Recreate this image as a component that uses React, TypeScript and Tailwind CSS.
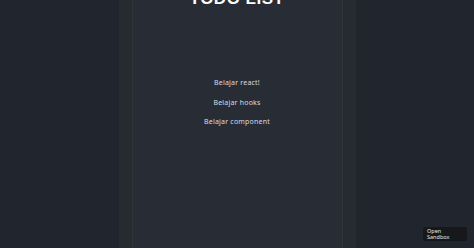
import React from 'react'

const App = () => {
    const todos: string[] = ['Belajar react!', 'Belajar hooks', 'Belajar component']

    return (
        <div className="relative h-[248px] w-full overflow-hidden bg-[#21252d] font-['Noto_Sans',sans-serif]">
            {/* column */}
            <div className="mx-auto flex h-full w-[237px] bg-[#262a31] px-[13px]">
                <div className="flex h-full w-full flex-col items-center border-x border-[#2b3639] bg-[#282c35]">
                    <h1 className="mt-[-10px] text-[17px] font-bold uppercase leading-[18px] tracking-[0.5px] text-white font-['Liberation_Sans',sans-serif]">
                        Todo List
                    </h1>
                    <ul className="mt-[70px] flex flex-col items-center gap-[9.5px]">
                        {todos.map((item) => (
                            <li key={item} className="text-[7px] leading-[10px] tracking-[0.2px] text-[#dadce0]">
                                {item}
                            </li>
                        ))}
                    </ul>
                </div>
            </div>

            {/* sandbox button */}
            <div className="absolute bottom-[7px] right-[7px] flex h-[14px] w-[44px] flex-col justify-center rounded-[2px] bg-[#17181b] pl-[4px] text-[5.5px] leading-[6.5px] text-[#e6e6e6]">
                <span>Open</span>
                <span>Sandbox</span>
            </div>
        </div>
    )
}

export default App
